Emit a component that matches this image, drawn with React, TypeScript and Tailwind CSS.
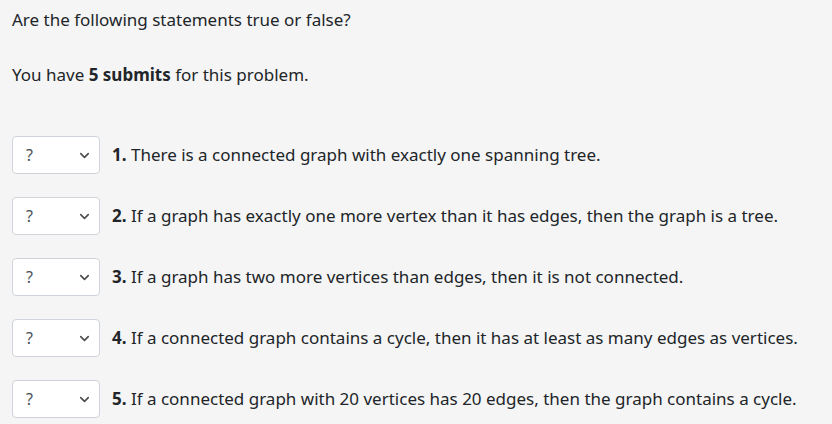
import { ChevronDown } from 'lucide-react'

const statements = [
  'There is a connected graph with exactly one spanning tree.',
  'If a graph has exactly one more vertex than it has edges, then the graph is a tree.',
  'If a graph has two more vertices than edges, then it is not connected.',
  'If a connected graph contains a cycle, then it has at least as many edges as vertices.',
  'If a connected graph with 20 vertices has 20 edges, then the graph contains a cycle.',
]

export default function App() {
  return (
    <div
      className="min-h-[424px] w-[832px] bg-[#f5f5f5] px-3 pt-[8px] text-[17px] text-[#212529]"
      style={{ fontFamily: '"Noto Sans", sans-serif' }}
    >
      <p className="leading-6">Are the following statements true or false?</p>
      <p className="mt-[31px] leading-6">
        You have <b className="font-bold">5 submits</b> for this problem.
      </p>
      <div className="mt-[49px] flex flex-col gap-[23px]">
        {statements.map((s, i) => (
          <div key={i} className="flex items-center gap-3">
            <div className="flex h-[38px] w-[88px] shrink-0 items-center justify-between rounded-[4px] border border-[#ced4da] bg-white pl-[13px] pr-[7px]">
              <span className="text-[16px] text-[#495057]">?</span>
              <ChevronDown className="h-[15px] w-[15px] text-[#4a4a4a]" strokeWidth={2.5} />
            </div>
            <p className="whitespace-nowrap leading-6">
              <b className="font-bold">{i + 1}.</b> {s}
            </p>
          </div>
        ))}
      </div>
    </div>
  )
}
